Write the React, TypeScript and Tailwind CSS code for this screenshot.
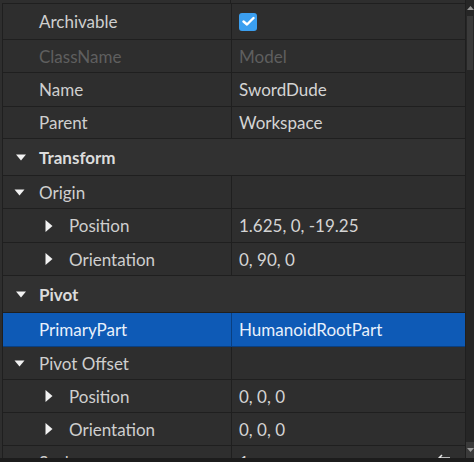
import React from "react";

type Row =
  | { kind: "prop"; h: number; name: string; value?: React.ReactNode; indent?: 0 | 1; arrow?: "down" | "right"; dim?: boolean; selected?: boolean; extra?: React.ReactNode }
  | { kind: "header"; h: number; name: string };

const Down = ({ small }: { small?: boolean }) => (
  <svg width={small ? 10 : 11} height="7" viewBox="0 0 10 7" className="block">
    <path d="M0 0.5 L10 0.5 L5 6.5 Z" fill="#f2f2f2" />
  </svg>
);

const Right = () => (
  <svg width="8" height="12" viewBox="0 0 8 12" className="block">
    <path d="M0.5 0 L7.5 6 L0.5 12 Z" fill="#f2f2f2" />
  </svg>
);

const Check = () => (
  <div className="w-[18px] h-[18px] rounded-[3px] bg-[#3b9ff0] flex items-center justify-center">
    <svg width="13" height="11" viewBox="0 0 13 11">
      <path d="M1.5 5.5 L5 8.5 L11.5 2" stroke="#ffffff" strokeWidth="2.4" fill="none" strokeLinecap="round" strokeLinejoin="round" />
    </svg>
  </div>
);

// small reset arrow shown at the end of the Scale value cell
const ResetArrow = () => (
  <svg width="14" height="10" viewBox="0 0 14 10" className="absolute right-[14px] top-[4px]">
    <path d="M13 8 L2 8 M5 5 L2 8 L5 11" stroke="#e6e6e6" strokeWidth="1.5" fill="none" />
  </svg>
);

const rows: Row[] = [
  { kind: "prop", h: 36, name: "Archivable", value: <Check /> },
  { kind: "prop", h: 33, name: "ClassName", value: "Model", dim: true },
  { kind: "prop", h: 34, name: "Name", value: "SwordDude" },
  { kind: "prop", h: 32, name: "Parent", value: "Workspace" },
  { kind: "header", h: 37, name: "Transform" },
  { kind: "prop", h: 33, name: "Origin", arrow: "down" },
  { kind: "prop", h: 34, name: "Position", value: "1.625, 0, -19.25", indent: 1, arrow: "right" },
  { kind: "prop", h: 33, name: "Orientation", value: "0, 90, 0", indent: 1, arrow: "right" },
  { kind: "header", h: 37, name: "Pivot" },
  { kind: "prop", h: 34, name: "PrimaryPart", value: "HumanoidRootPart", selected: true },
  { kind: "prop", h: 33, name: "Pivot Offset", arrow: "down" },
  { kind: "prop", h: 33, name: "Position", value: "0, 0, 0", indent: 1, arrow: "right" },
  { kind: "prop", h: 33, name: "Orientation", value: "0, 0, 0", indent: 1, arrow: "right" },
  { kind: "prop", h: 33, name: "Scale", value: "1", extra: <ResetArrow /> },
];

function PropRow({ r }: { r: Row }) {
  if (r.kind === "header") {
    return (
      <div style={{ height: r.h }} className="flex items-center bg-[#313131] border-b border-[#1f1f1f] shrink-0">
        <div className="w-[36px] pl-[13px] flex items-center">
          <Down small />
        </div>
        <span className="font-bold text-[#dcdcdc]">{r.name}</span>
      </div>
    );
  }
  const sel = r.selected;
  const nameColor = r.dim ? "text-[#5f5f5f]" : sel ? "text-[#e8f0fb]" : "text-[#cfcfcf]";
  const valColor = r.dim ? "text-[#5f5f5f]" : sel ? "text-[#e8f0fb]" : "text-[#d4d4d4]";
  return (
    <div style={{ height: r.h }} className={`flex shrink-0 border-b ${sel ? "border-[#0a3f80]" : "border-[#1f1f1f]"}`}>
      <div className={`w-[229px] flex items-center border-r ${sel ? "bg-[#0e5ab6] border-[#0a3f80]" : "border-[#1f1f1f]"}`}>
        {r.indent ? (
          <div className="w-[66px] pl-[42px] flex items-center">{r.arrow === "right" ? <Right /> : null}</div>
        ) : (
          <div className="w-[36px] pl-[11px] flex items-center">{r.arrow === "down" ? <Down /> : null}</div>
        )}
        <span className={nameColor}>{r.name}</span>
      </div>
      <div className={`relative flex-1 flex items-center pl-[7px] ${sel ? "bg-[#0e5ab6]" : ""} ${valColor}`}>
        {r.value}
        {r.extra}
      </div>
    </div>
  );
}

export default function App() {
  return (
    <div
      className="w-[474px] h-[462px] bg-[#2e2e2e] flex flex-col overflow-hidden text-[17px] leading-none"
      style={{ fontFamily: "Lato, 'Noto Sans', sans-serif" }}
    >
      <div className="flex-1 flex overflow-hidden">
        <div className="flex-1 flex flex-col overflow-hidden pl-[2px]">
          <div className="h-[4px] shrink-0 border-b border-[#1f1f1f] flex">
            <div className="w-[229px] border-r border-[#1f1f1f]" />
          </div>
          <div className="border-l border-[#1f1f1f] flex flex-col">
            {rows.map((r, i) => (
              <PropRow key={i} r={r} />
            ))}
          </div>
        </div>
        <div className="w-[9px] flex flex-col bg-[#262626] border-l border-[#1f1f1f]">
          <div className="h-[16px] flex items-center justify-center">
            <svg width="7" height="4" viewBox="0 0 7 4">
              <path d="M0 4 L3.5 0 L7 4 Z" fill="#9a9a9a" />
            </svg>
          </div>
          <div className="h-[54px] bg-[#3a3a3a] mx-[1px]" />
          <div className="flex-1" />
          <div className="h-[16px] flex items-center justify-center bg-[#3a3a3a]">
            <svg width="7" height="4" viewBox="0 0 7 4">
              <path d="M0 0 L3.5 4 L7 0 Z" fill="#9a9a9a" />
            </svg>
          </div>
        </div>
      </div>
      <div className="h-[4px] shrink-0 bg-[#1c1c1c]" />
    </div>
  );
}
